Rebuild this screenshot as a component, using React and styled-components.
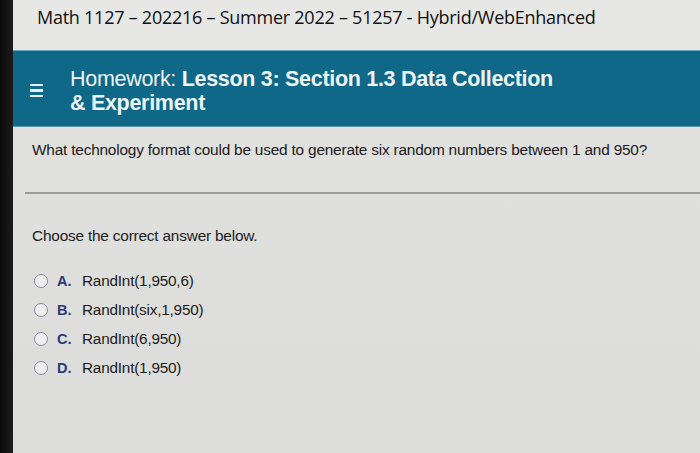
import React from 'react';
import styled, { createGlobalStyle } from 'styled-components';

const GlobalStyle = createGlobalStyle`
  html, body {
    margin: 0;
    padding: 0;
    background: #111;
  }
  * { box-sizing: border-box; }
`

const options = [
  { letter: 'A.', text: 'RandInt(1,950,6)' },
  { letter: 'B.', text: 'RandInt(six,1,950)' },
  { letter: 'C.', text: 'RandInt(6,950)' },
  { letter: 'D.', text: 'RandInt(1,950)' },
]

const App = () => {
  return (
    <>
      <GlobalStyle />
      <Screen>
        <Bezel />
        <Page>
          <CourseBar>
            <CourseTitle>Math 1127 – 202216 – Summer 2022 – 51257 - Hybrid/WebEnhanced</CourseTitle>
          </CourseBar>
          <HomeworkBar>
            <Menu>
              <span /><span /><span />
            </Menu>
            <HomeworkTitle>
              Homework: <strong>Lesson 3: Section 1.3 Data Collection<br />&amp; Experiment</strong>
            </HomeworkTitle>
          </HomeworkBar>
          <Content>
            <Question>What technology format could be used to generate six random numbers between 1 and 950?</Question>
            <Divider />
            <Prompt>Choose the correct answer below.</Prompt>
            <Options>
              {options.map((o) => (
                <Option key={o.letter}>
                  <Radio />
                  <Letter>{o.letter}</Letter>
                  <OptionText>{o.text}</OptionText>
                </Option>
              ))}
            </Options>
          </Content>
        </Page>
      </Screen>
    </>
  )
}
export default App

const Screen = styled.div`
  display: flex;
  width: 700px;
  height: 453px;
  overflow: hidden;
`
const Bezel = styled.div`
  width: 13px;
  flex-shrink: 0;
  background: linear-gradient(to right, #0a0a0a, #1c1c1c);
`
const Page = styled.div`
  flex: 1;
  display: flex;
  flex-flow: column nowrap;
  background: linear-gradient(to bottom, #e2e2e0, #dcdcda);
`
const CourseBar = styled.div`
  height: 50px;
  padding: 5px 0 0 24px;
  background: #e7e7e5;
`
const CourseTitle = styled.div`
  font-family: "Open Sans", sans-serif;
  font-size: 18px;
  letter-spacing: -0.25px;
  color: #111;
`
const HomeworkBar = styled.div`
  height: 77px;
  display: flex;
  flex-flow: row nowrap;
  align-items: center;
  padding: 4px 0 0 17px;
  background: #0f6887;
  border-top: 1px solid #6aa6bd;
  border-bottom: 1px solid #5c95aa;
`
const Menu = styled.div`
  width: 13px;
  display: flex;
  flex-flow: column nowrap;
  gap: 3px;
  margin: 0 27px 0 0;

  span {
    height: 2.5px;
    background: #e8eef0;
  }
`
const HomeworkTitle = styled.div`
  font-family: "Liberation Sans", Arial, sans-serif;
  font-size: 21.5px;
  line-height: 24px;
  color: #eef3f5;
  letter-spacing: -0.3px;

  strong {
    font-weight: 700;
  }
`
const Content = styled.div`
  display: flex;
  flex-flow: column nowrap;
  padding: 14px 0 0 19px;
  font-family: "Liberation Sans", Arial, sans-serif;
  color: #1c1c1c;
`
const Question = styled.div`
  font-size: 15.4px;
  letter-spacing: -0.2px;
`
const Divider = styled.div`
  height: 2px;
  margin: 33px 0 0 -7px;
  background: #9c9c9c;
`
const Prompt = styled.div`
  margin-top: 33px;
  font-size: 15.4px;
  letter-spacing: -0.2px;
`
const Options = styled.div`
  display: flex;
  flex-flow: column nowrap;
  gap: 11px;
  margin-top: 27px;
  padding-left: 2px;
`
const Option = styled.div`
  display: flex;
  flex-flow: row nowrap;
  align-items: center;
  height: 18px;
`
const Radio = styled.span`
  width: 14px;
  height: 14px;
  border-radius: 50%;
  border: 1.5px solid #8a8aa0;
  background: #eeeeee;
  margin-right: 9px;
`
const Letter = styled.span`
  width: 25px;
  font-size: 14.5px;
  font-weight: 700;
  color: #2c3a78;
`
const OptionText = styled.span`
  font-size: 15.3px;
  letter-spacing: -0.2px;
`
